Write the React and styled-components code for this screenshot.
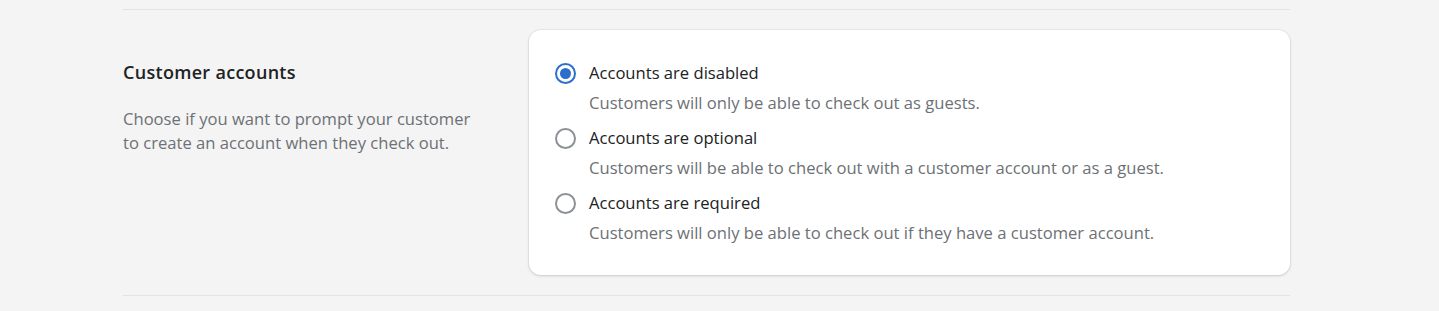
import React, { useState } from "react";
import styled, { createGlobalStyle } from "styled-components";

const GlobalStyle = createGlobalStyle`
  html, body {
    margin: 0;
    padding: 0;
    background: #f4f4f4;
    font-family: "Open Sans", "Noto Sans", Arial, sans-serif;
    color: #202223;
    -webkit-font-smoothing: antialiased;
  }
`;

const Page = styled.div`
  width: 1167px;
  margin: 0 0 0 123px;
  padding-top: 9px;
`;

const Divider = styled.hr`
  margin: 0;
  border: none;
  border-top: 1px solid #e1e3e5;
`;

const Section = styled.section`
  display: grid;
  grid-template-columns: 366px 1fr;
  column-gap: 40px;
  padding: 20px 0;
`;

const Annotation = styled.div`
  padding-top: 30px;
`;

const Heading = styled.h2`
  margin: 0;
  font-size: 18px;
  letter-spacing: 0.3px;
  line-height: 24px;
  font-weight: 600;
  color: #202223;
`;

const Description = styled.p`
  margin: 23px 0 0;
  font-size: 16.6px;
  line-height: 24px;
  color: #6d7175;
`;

const Card = styled.div`
  background: #ffffff;
  border-radius: 12px;
  box-shadow: 0 0 0 1px rgba(63, 63, 68, 0.05), 0 1px 3px rgba(63, 63, 68, 0.18);
  padding: 29px 26px 30px;
  display: flex;
  flex-direction: column;
  gap: 9px;
`;

const Option = styled.label`
  display: flex;
  flex-direction: column;
  cursor: pointer;
`;

const OptionRow = styled.span`
  display: flex;
  align-items: center;
  height: 28px;
  gap: 13px;
`;

const RadioCircle = styled.span`
  box-sizing: border-box;
  width: 21px;
  height: 21px;
  border-radius: 50%;
  border: 2px solid ${({ checked }) => (checked ? "#2c6ecb" : "#8c9196")};
  display: flex;
  align-items: center;
  justify-content: center;
  flex-shrink: 0;
  &::after {
    content: "";
    width: 11px;
    height: 11px;
    border-radius: 50%;
    background: #2c6ecb;
    display: ${({ checked }) => (checked ? "block" : "none")};
  }
`;

const HiddenInput = styled.input`
  position: absolute;
  opacity: 0;
  width: 0;
  height: 0;
`;

const OptionLabel = styled.span`
  font-size: 16.6px;
  line-height: 24px;
  color: #202223;
`;

const HelpText = styled.span`
  margin-top: 4px;
  padding-left: 34px;
  font-size: 16.6px;
  line-height: 24px;
  color: #6d7175;
`;

const options = [
  {
    id: "disabled",
    label: "Accounts are disabled",
    help: "Customers will only be able to check out as guests.",
  },
  {
    id: "optional",
    label: "Accounts are optional",
    help: "Customers will be able to check out with a customer account or as a guest.",
  },
  {
    id: "required",
    label: "Accounts are required",
    help: "Customers will only be able to check out if they have a customer account.",
  },
];

export default function App() {
  const [value, setValue] = useState("disabled");

  return (
    <>
      <GlobalStyle />
      <Page>
        <Divider />
        <Section>
          <Annotation>
            <Heading>Customer accounts</Heading>
            <Description>
              Choose if you want to prompt your customer to create an account when they check out.
            </Description>
          </Annotation>
          <Card>
            {options.map((opt) => (
              <Option key={opt.id}>
                <OptionRow>
                  <HiddenInput
                    type="radio"
                    name="accounts"
                    checked={value === opt.id}
                    onChange={() => setValue(opt.id)}
                  />
                  <RadioCircle checked={value === opt.id} />
                  <OptionLabel>{opt.label}</OptionLabel>
                </OptionRow>
                <HelpText>{opt.help}</HelpText>
              </Option>
            ))}
          </Card>
        </Section>
        <Divider />
      </Page>
    </>
  );
}
